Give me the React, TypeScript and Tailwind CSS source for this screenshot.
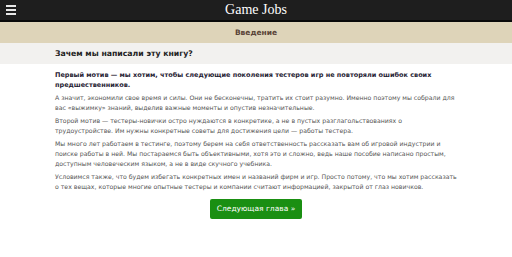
export default function App() {
  return (
    <main className="w-[512px] h-[257px] bg-white overflow-hidden" style={{ fontFamily: "Verdana, 'DejaVu Sans', sans-serif" }}>
      <header className="h-[22px] bg-[#1e1e1e] border-b-2 border-[#0a0a0a] flex items-center relative">
        <div className="absolute left-[6px] top-[5px] flex flex-col gap-[2px]">
          <span className="block w-[10px] h-[2px] bg-[#e8e8e8]" />
          <span className="block w-[10px] h-[2px] bg-[#e8e8e8]" />
          <span className="block w-[10px] h-[2px] bg-[#e8e8e8]" />
        </div>
        <h1 className="w-full text-center text-white text-[14px] leading-none" style={{ fontFamily: "'Liberation Serif', serif" }}>Game Jobs</h1>
      </header>
      <div className="h-[21px] bg-[#ded4b9] flex items-center justify-center">
        <span className="text-[7.5px] font-bold text-[#5a4538]">Введение</span>
      </div>
      <div className="h-[21px] bg-[#f2f1ef] flex items-center px-[55px]">
        <h2 className="text-[7.75px] font-bold text-[#222]">Зачем мы написали эту книгу?</h2>
      </div>
      <section className="pl-[55px] pr-[51px] pt-[6px] text-[6.2px] leading-[10px] text-[#555] flex flex-col gap-[3px]">
        <p className="font-bold text-[6.5px] text-[#1f2233]">Первый мотив — мы хотим, чтобы следующие поколения тестеров игр не повторяли ошибок своих предшественников.</p>
        <p>А значит, экономили свое время и силы. Они не бесконечны, тратить их стоит разумно. Именно поэтому мы собрали для вас «выжимку» знаний, выделив важные моменты и опустив незначительные.</p>
        <p>Второй мотив — тестеры-новички остро нуждаются в конкретике, а не в пустых разглагольствованиях о трудоустройстве. Им нужны конкретные советы для достижения цели — работы тестера.</p>
        <p>Мы много лет работаем в тестинге, поэтому берем на себя ответственность рассказать вам об игровой индустрии и поиске работы в ней. Мы постараемся быть объективными, хотя это и сложно, ведь наше пособие написано простым, доступным человеческим языком, а не в виде скучного учебника.</p>
        <p>Условимся также, что будем избегать конкретных имен и названий фирм и игр. Просто потому, что мы хотим рассказать о тех вещах, которые многие опытные тестеры и компании считают информацией, закрытой от глаз новичков.</p>
        <div className="flex justify-center mt-[4px] pr-[4px]">
          <a href="#" className="h-[20px] px-[7px] flex items-center rounded-[2px] bg-[#1a8f12] text-white text-[7.5px]">Следующая глава »</a>
        </div>
      </section>
    </main>
  );
}
